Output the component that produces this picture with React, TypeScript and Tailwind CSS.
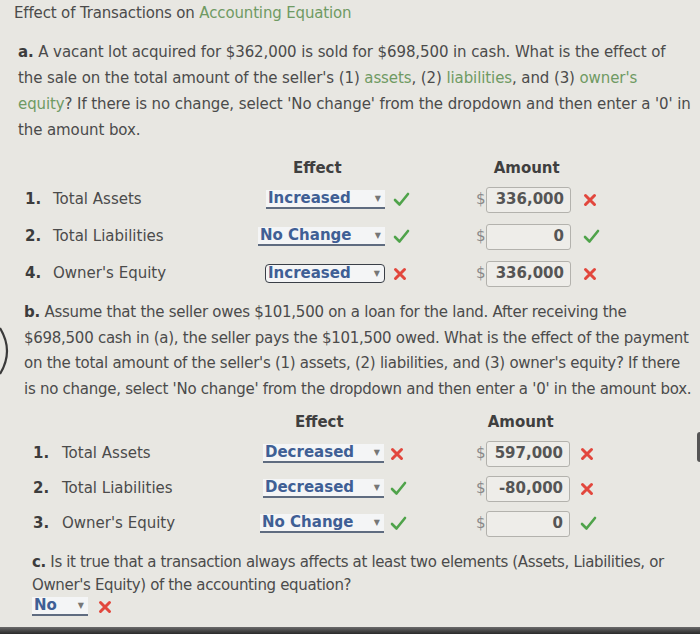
import React from "react";

const GREEN = "text-[#6f9a63]";

function Check() {
  return (
    <svg width="17" height="15" viewBox="0 0 17 15" className="block">
      <path d="M2 8 L6.5 12.5 L15 2" fill="none" stroke="#4fa34a" strokeWidth="2.6" strokeLinecap="round" strokeLinejoin="round" />
    </svg>
  );
}

function Cross() {
  return (
    <svg width="14" height="14" viewBox="0 0 14 14" className="block">
      <path d="M2.5 2.5 L11.5 11.5 M11.5 2.5 L2.5 11.5" fill="none" stroke="#e2473d" strokeWidth="3" strokeLinecap="round" />
    </svg>
  );
}

function Mark({ ok }: { ok: boolean }) {
  return ok ? <Check /> : <Cross />;
}

function Select({
  value,
  width,
  focused = false,
}: {
  value: string;
  width: string;
  focused?: boolean;
}) {
  return (
    <div
      className={`flex h-[19px] items-center justify-between bg-[#f4f5f6] pl-[2px] pr-[4px] ${width} ${
        focused
          ? "rounded-[4px] border-[1.5px] border-[#3a3f47]"
          : "border-b-2 border-[#5f6c80]"
      }`}
    >
      <span className="text-[15px] font-bold leading-[17px] text-[#3f5f95]">
        {value}
      </span>
      <span className="text-[8px] leading-none text-[#777]">▼</span>
    </div>
  );
}

function Amount({ value, width }: { value: string; width: string }) {
  return (
    <div className="flex items-center">
      <span className="w-[10px] text-[15px] text-[#8a8a8a]">$</span>
      <div
        className={`flex h-[26px] items-center justify-end rounded-[3px] border border-[#b3b2ad] bg-[#eeede9] pr-[6px] text-[15px] font-bold text-[#555] ${width}`}
      >
        {value}
      </div>
    </div>
  );
}

type RowData = {
  n: string;
  label: string;
  sel: string;
  selW: string;
  focused?: boolean;
  selOk: boolean;
  amt: string;
  amtOk: boolean;
};

const partA: RowData[] = [
  { n: "1.", label: "Total Assets", sel: "Increased", selW: "w-[119px]", selOk: true, amt: "336,000", amtOk: false },
  { n: "2.", label: "Total Liabilities", sel: "No Change", selW: "w-[127px]", selOk: true, amt: "0", amtOk: true },
  { n: "4.", label: "Owner's Equity", sel: "Increased", selW: "w-[120px]", focused: true, selOk: false, amt: "336,000", amtOk: false },
];

const partB: RowData[] = [
  { n: "1.", label: "Total Assets", sel: "Decreased", selW: "w-[121px]", selOk: false, amt: "597,000", amtOk: false },
  { n: "2.", label: "Total Liabilities", sel: "Decreased", selW: "w-[121px]", selOk: true, amt: "-80,000", amtOk: false },
  { n: "3.", label: "Owner's Equity", sel: "No Change", selW: "w-[124px]", selOk: true, amt: "0", amtOk: true },
];

export default function App() {
  return (
    <div
      className="relative h-[634px] w-[700px] overflow-hidden bg-[#e8e7e2] text-[15px] text-[#4b4b4b]"
      style={{ fontFamily: '"DejaVu Sans", Verdana, sans-serif' }}
    >
      {/* title */}
      <div className="pl-[14px] pt-[3px] leading-[20px] tracking-[-0.15px]">
        Effect of Transactions on <span className={GREEN}>Accounting Equation</span>
      </div>

      {/* part a */}
      <p className="mt-[16px] whitespace-nowrap pl-[18px] leading-[26px] tracking-[-0.1px]">
        <b className="text-[#3c3c3c]">a.</b> A vacant lot acquired for $362,000 is sold for $698,500 in cash. What is the effect of
        <br />
        the sale on the total amount of the seller's (1) <span className={GREEN}>assets</span>, (2){" "}
        <span className={GREEN}>liabilities</span>, and (3) <span className={GREEN}>owner's</span>
        <br />
        <span className={GREEN}>equity</span>? If there is no change, select 'No change' from the dropdown and then enter a '0' in
        <br />
        the amount box.
      </p>

      <div className="mt-[15px] flex h-[20px] items-center font-bold text-[#3f3f3f]">
        <span className="ml-[293px]">Effect</span>
        <span className="ml-[152px]">Amount</span>
      </div>
      <div className="mt-[3px] flex flex-col">
        {partA.map((r) => (
          <div key={r.n + r.label} className="flex h-[37px] items-center pl-[25px]">
            <b className="w-[28px] text-[#3c3c3c]">{r.n}</b>
            <span className="w-[204px]">{r.label}</span>
            <div className="flex w-[128px] justify-end">
              <Select value={r.sel} width={r.selW} focused={r.focused} />
            </div>
            <div className="ml-[8px] w-[83px]">
              <Mark ok={r.selOk} />
            </div>
            <Amount value={r.amt} width="w-[85px]" />
            <div className="ml-[12px]">
              <Mark ok={r.amtOk} />
            </div>
          </div>
        ))}
      </div>

      {/* part b */}
      <p className="mt-[8px] whitespace-nowrap pl-[24px] leading-[25.5px] tracking-[-0.27px]">
        <b className="text-[#3c3c3c]">b.</b> Assume that the seller owes $101,500 on a loan for the land. After receiving the
        <br />
        $698,500 cash in (a), the seller pays the $101,500 owed. What is the effect of the payment
        <br />
        on the total amount of the seller's (1) assets, (2) liabilities, and (3) owner's equity? If there
        <br />
        is no change, select 'No change' from the dropdown and then enter a '0' in the amount box.
      </p>

      <div className="mt-[10px] flex h-[20px] items-center font-bold text-[#3f3f3f]">
        <span className="ml-[295px]">Effect</span>
        <span className="ml-[144px]">Amount</span>
      </div>
      <div className="mt-[4px] flex flex-col">
        {partB.map((r) => (
          <div key={r.n + r.label} className="flex h-[35px] items-center pl-[33px]">
            <b className="w-[29px] text-[#3c3c3c]">{r.n}</b>
            <span className="w-[198px]">{r.label}</span>
            <div className="flex w-[124px] justify-end">
              <Select value={r.sel} width={r.selW} />
            </div>
            <div className="ml-[6px] w-[86px]">
              <Mark ok={r.selOk} />
            </div>
            <Amount value={r.amt} width="w-[84px]" />
            <div className="ml-[10px]">
              <Mark ok={r.amtOk} />
            </div>
          </div>
        ))}
      </div>

      {/* part c */}
      <p className="mt-[10px] whitespace-nowrap pl-[32px] leading-[23px] tracking-[-0.35px]">
        <b className="text-[#3c3c3c]">c.</b> Is it true that a transaction always affects at least two elements (Assets, Liabilities, or
        <br />
        Owner's Equity) of the accounting equation?
      </p>
      <div className="mt-[0px] flex items-center pl-[32px]">
        <Select value="No" width="w-[56px]" />
        <div className="ml-[10px]">
          <Cross />
        </div>
      </div>

      {/* photo artefacts: bezel arc, scrollbar, bottom edge */}
      <svg className="absolute left-0 top-[326px]" width="14" height="50" viewBox="0 0 14 50">
        <path d="M0 2 Q14 25 0 48" fill="none" stroke="#3a3a3a" strokeWidth="2.2" />
      </svg>
      <div className="absolute right-0 top-[432px] h-[30px] w-[3px] rounded-l bg-[#555]" />
      <div className="absolute bottom-0 left-0 h-[7px] w-full bg-gradient-to-b from-[#6b6b6b] to-[#2a2a2a]" />
    </div>
  );
}
